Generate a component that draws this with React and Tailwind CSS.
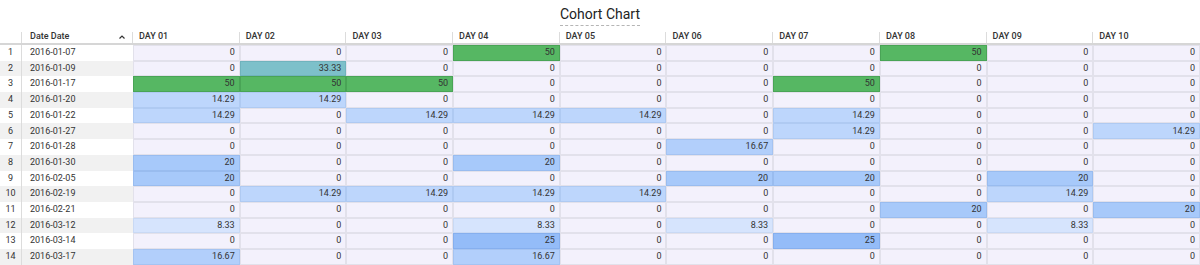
const days = ['DAY 01', 'DAY 02', 'DAY 03', 'DAY 04', 'DAY 05', 'DAY 06', 'DAY 07', 'DAY 08', 'DAY 09', 'DAY 10']

const rows = [
    ['2016-01-07', [0, 0, 0, 50, 0, 0, 0, 50, 0, 0]],
    ['2016-01-09', [0, 33.33, 0, 0, 0, 0, 0, 0, 0, 0]],
    ['2016-01-17', [50, 50, 50, 0, 0, 0, 50, 0, 0, 0]],
    ['2016-01-20', [14.29, 14.29, 0, 0, 0, 0, 0, 0, 0, 0]],
    ['2016-01-22', [14.29, 0, 14.29, 14.29, 14.29, 0, 14.29, 0, 0, 0]],
    ['2016-01-27', [0, 0, 0, 0, 0, 0, 14.29, 0, 0, 14.29]],
    ['2016-01-28', [0, 0, 0, 0, 0, 16.67, 0, 0, 0, 0]],
    ['2016-01-30', [20, 0, 0, 20, 0, 0, 0, 0, 0, 0]],
    ['2016-02-05', [20, 0, 0, 0, 0, 20, 20, 0, 20, 0]],
    ['2016-02-19', [0, 14.29, 14.29, 14.29, 14.29, 0, 0, 0, 14.29, 0]],
    ['2016-02-21', [0, 0, 0, 0, 0, 0, 0, 20, 0, 20]],
    ['2016-03-12', [8.33, 0, 0, 8.33, 0, 8.33, 0, 0, 8.33, 0]],
    ['2016-03-14', [0, 0, 0, 25, 0, 0, 25, 0, 0, 0]],
    ['2016-03-17', [16.67, 0, 0, 16.67, 0, 0, 0, 0, 0, 0]],
]

// next row is only a sliver at the bottom edge, colours only
const tail = [20, 0, 14.29, 0, 0, 0, 0, 8.33, 0, 0]

const tone = {
    0: 'bg-[#f3f1fc] border-[#e2e1eb]',
    8.33: 'bg-[#d6e4fd] border-[#c9d9f4]',
    14.29: 'bg-[#bdd6fc] border-[#afcaf2]',
    16.67: 'bg-[#b2cffb] border-[#a5c3f1]',
    20: 'bg-[#a7c9fa] border-[#99bcef]',
    25: 'bg-[#94bcf8] border-[#86afee]',
    33.33: 'bg-[#7dc0ca] border-[#70b3bd]',
    50: 'bg-[#56b763] border-[#49a456]',
}

function SortIcon() {
    return (
        <svg width="8" height="6" viewBox="0 0 8 6" className="mr-[6px]">
            <path d="M1.5 4.5 L4 2 L6.5 4.5" fill="none" stroke="#333" strokeWidth="1.2" />
        </svg>
    )
}

export default function App() {
    return (
        <div className="w-[1200px] h-[265px] overflow-hidden bg-white text-[#333]" style={{ fontFamily: 'Roboto, "Liberation Sans", sans-serif' }}>
            {/* Title */}
            <div className="h-[30px] flex justify-center pt-[5px]">
                <span className="text-[14px] leading-[18px] text-[#222] h-[21px] border-b border-dashed border-[#b5b5b5]">Cohort Chart</span>
            </div>

            <div className="grid grid-cols-[22px_111px_repeat(10,1fr)]">
                {/* Header */}
                <div className="h-[15px] border-b-2 border-[#d6d6d6] flex items-center justify-end pt-px">
                    <span className="w-px h-[11px] bg-[#dcdcdc]"></span>
                </div>
                <div className="h-[15px] border-b-2 border-[#d6d6d6] flex items-center text-[9px] font-medium pl-[8px] pt-px">
                    <span className="flex-1">Date Date</span>
                    <SortIcon />
                    <span className="w-px h-[11px] bg-[#dcdcdc]"></span>
                </div>
                {days.map((d, i) => (
                    <div key={d} className="h-[15px] border-b-2 border-[#d6d6d6] flex items-center text-[9px] font-medium pt-px">
                        <span className="flex-1 pl-[6px]">{d}</span>
                        {i < days.length - 1 && <span className="w-px h-[11px] bg-[#dcdcdc]"></span>}
                    </div>
                ))}

                {/* Rows */}
                {rows.map(([date, vals], r) => (
                    <div key={date} className="contents">
                        <div className={`h-[15.7px] flex items-center justify-center text-[9px] border-r border-[#dcdcdc] ${r % 2 ? 'bg-[#f1f1f1]' : 'bg-white'}`}>
                            {r + 1}
                        </div>
                        <div className={`h-[15.7px] flex items-center pl-[8px] text-[9px] ${r % 2 ? 'bg-[#f1f1f1]' : 'bg-white'}`}>
                            {date}
                        </div>
                        {vals.map((v, c) => (
                            <div
                                key={c}
                                className={`h-[15.7px] flex items-center justify-end pr-[4px] text-[9px] border ${tone[v]}`}
                            >
                                {v}
                            </div>
                        ))}
                    </div>
                ))}

                <div className="h-[15.7px] bg-white border-r border-[#dcdcdc]"></div>
                <div className="h-[15.7px] bg-white"></div>
                {tail.map((v, c) => (
                    <div key={c} className={`h-[15.7px] border ${tone[v]}`}></div>
                ))}
            </div>
        </div>
    )
}
